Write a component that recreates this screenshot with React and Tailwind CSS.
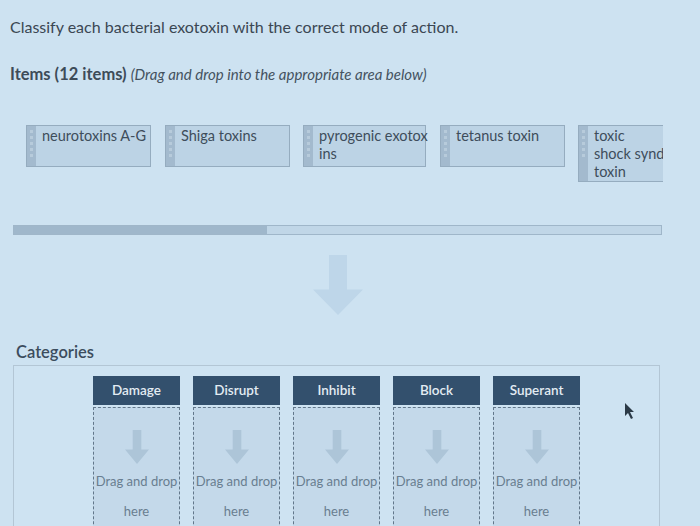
import React from "react";

const chips = [
  { lines: ["neurotoxins A-G"], cls: "w-[125px]" },
  { lines: ["Shiga toxins"], cls: "w-[125px] ml-[14px]" },
  { lines: ["pyrogenic exotox", "ins"], cls: "w-[123px] ml-[13px]" },
  { lines: ["tetanus toxin"], cls: "w-[125px] ml-[14px]" },
  { lines: ["toxic", "shock synd", "toxin"], cls: "w-[125px] ml-[13px]" },
];

const cats = ["Damage", "Disrupt", "Inhibit", "Block", "Superant"];

function Grip() {
  return (
    <div className="w-[9px] shrink-0 bg-[#a3bace] flex flex-col items-center gap-[3px] pt-[4px]">
      {[0, 1, 2, 3, 4].map((i) => (
        <div key={i} className="w-[3px] h-[3px] bg-[#b7cbdb]" />
      ))}
    </div>
  );
}

function Arrow({ className, color }) {
  return (
    <svg className={className} viewBox="0 0 50 66" preserveAspectRatio="none">
      <path d="M16 0 H34 V38 H50 L25 66 L0 38 H16 Z" fill={color} />
    </svg>
  );
}

export default function App() {
  return (
    <div
      className="w-[700px] h-[526px] overflow-hidden bg-[#cde2f1] text-[#3a4856]"
      style={{ fontFamily: "Lato, 'Open Sans', sans-serif" }}
    >
      <div className="pl-[10px] pt-[15px] text-[16px] leading-[24px] text-[#3b4753]">
        Classify each bacterial exotoxin with the correct mode of action.
      </div>
      <div className="pl-[10px] pt-[23px] flex items-baseline gap-[4px]">
        <span className="text-[16.5px] font-bold text-[#3d4b58]">Items (12 items)</span>
        <span className="text-[15px] italic text-[#44525f]">(Drag and drop into the appropriate area below)</span>
      </div>

      <div className="mx-[13px] w-[650px] mt-[38px] pl-[13px] flex overflow-hidden items-start">
        {chips.map((c, i) => (
          <div
            key={i}
            className={`${c.cls} shrink-0 flex border border-[#95acbf] bg-[#bcd3e5] min-h-[42px]`}
          >
            <Grip />
            <div className="pl-[6px] pt-[1px] text-[14.5px] leading-[18px] text-[#3e4d5b] whitespace-nowrap">
              {c.lines.map((l, j) => (
                <div key={j}>{l}</div>
              ))}
            </div>
          </div>
        ))}
      </div>

      <div className="mx-[13px] w-[649px] mt-[43px] h-[10px] flex border border-[#9fb6c9] bg-[#c0d6e7]">
        <div className="w-[253px] h-full bg-[#9fb7cb]" />
      </div>

      <div className="flex justify-center mt-[20px]">
        <Arrow className="w-[50px] h-[60px] ml-[-24px]" color="#bed6e9" />
      </div>

      <div className="pl-[16px] mt-[26px] text-[16.5px] font-semibold text-[#3c4d5e] leading-[22px]">
        Categories
      </div>

      <div className="relative mx-[13px] w-[647px] mt-[2px] h-[200px] border border-[#b3c6d5] bg-[#cee3f2] flex justify-center gap-[13px] pt-[10px]">
        {cats.map((c) => (
          <div key={c} className="w-[87px] flex flex-col">
            <div className="h-[30px] bg-[#33506d] text-[#e3ecf3] text-[13.5px] font-semibold flex items-center justify-center">
              {c}
            </div>
            <div className="mt-[2px] h-[160px] border border-dashed border-[#62778a] bg-[#c4d9ea] flex flex-col items-center">
              <Arrow className="w-[24px] h-[34px] mt-[22px]" color="#adc5d8" />
              <div className="mt-[8px] text-[13px] text-[#697e90] whitespace-nowrap">Drag and drop</div>
              <div className="mt-[10px] text-[13px] text-[#697e90]">here</div>
            </div>
          </div>
        ))}
        <svg className="absolute left-[610px] top-[36px] w-[12px] h-[18px]" viewBox="0 0 12 18">
          <path d="M1 1 L1 14 L4 11 L7 17 L9 16 L6 10 L10 10 Z" fill="#2b3a47" />
        </svg>
      </div>
    </div>
  );
}
